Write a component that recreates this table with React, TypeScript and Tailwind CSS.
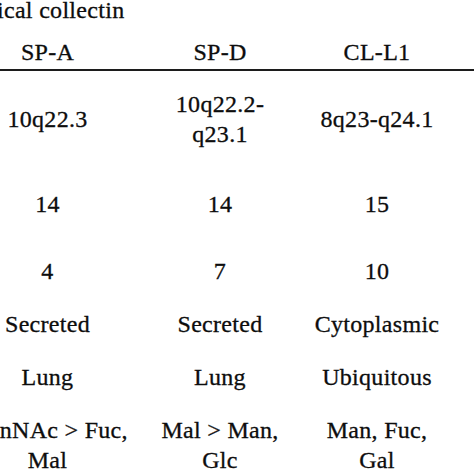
const rows: { h: string; cells: string[][] }[] = [
  { h: "h-[96px]", cells: [["10q22.3"], ["10q22.2-", "q23.1"], ["8q23-q24.1"]] },
  { h: "h-[73px]", cells: [["14"], ["14"], ["15"]] },
  { h: "h-[61px]", cells: [["4"], ["7"], ["10"]] },
  { h: "h-[45px]", cells: [["Secreted"], ["Secreted"], ["Cytoplasmic"]] },
  { h: "h-[61px]", cells: [["Lung"], ["Lung"], ["Ubiquitous"]] },
  {
    h: "h-[75px]",
    cells: [
      ["ManNAc > Fuc,", "Mal"],
      ["Mal > Man,", "Glc"],
      ["Man, Fuc,", "Gal"],
    ],
  },
];

const headers = ["SP-A", "SP-D", "CL-L1"];

export default function App() {
  return (
    <div className="w-[474px] h-[474px] overflow-hidden bg-white text-[#0d0d0d] text-[24px] tracking-[0.3px] font-['Liberation_Serif','Times_New_Roman',serif] [-webkit-text-stroke:0.3px_#0d0d0d]">
      <div className="h-[20px] leading-[20px] ml-[-3px] whitespace-nowrap">
        ical collectin
      </div>

      <div className="border-b-2 border-[#1c1c1c] pt-[17px] pb-[2px]">
        <div className="grid grid-cols-[175px_170px_144px] ml-[-40px] leading-[30px] text-center">
          {headers.map((h) => (
            <div key={h}>{h}</div>
          ))}
        </div>
      </div>

      {rows.map((r, i) => (
        <div
          key={i}
          className={`grid grid-cols-[175px_170px_144px] ml-[-40px] items-center leading-[30px] text-center ${r.h}`}
        >
          {r.cells.map((c, j) => (
            <div key={j} className="whitespace-nowrap">
              {c.map((line, k) => (
                <div key={k}>{line}</div>
              ))}
            </div>
          ))}
        </div>
      ))}
    </div>
  );
}
